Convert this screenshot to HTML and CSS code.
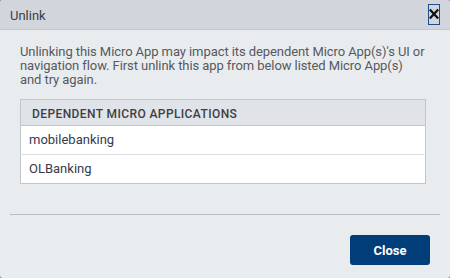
FILE: index.html
```html
<!DOCTYPE html>
<html lang="en">
<head>
  <meta charset="UTF-8">
  <title>Unlink</title>
  <link rel="stylesheet" href="styles.css">
</head>
<body>
  <div class="dialog">
    <div class="dialog-header">
      <span class="dialog-title">Unlink</span>
      <button class="close-x" aria-label="Close">
        <svg width="10" height="12" viewBox="0 0 10 12"><path d="M0.8 1.5 L9.2 10.5 M9.2 1.5 L0.8 10.5" stroke="#111" stroke-width="2.3"/></svg>
      </button>
    </div>
    <div class="dialog-body">
      <p class="message">Unlinking this Micro App may impact its dependent Micro App(s)'s UI or navigation flow. First unlink this app from below listed Micro App(s)<br>and try again.</p>
      <table class="dep-table">
        <thead>
          <tr><th>Dependent Micro Applications</th></tr>
        </thead>
        <tbody>
          <tr><td>mobilebanking</td></tr>
          <tr><td>OLBanking</td></tr>
        </tbody>
      </table>
    </div>
    <div class="dialog-footer">
      <button class="btn-close">Close</button>
    </div>
  </div>
</body>
</html>
```

FILE: styles.css
```css
html {
  background: #8a8f96;
}

body {
  margin: 0;
  font-family: Roboto, "Liberation Sans", sans-serif;
  font-size: 13px;
  color: #555;
}

.dialog {
  width: 450px;
  height: 278px;
  background: #e9ecef;
  border-radius: 3px;
  overflow: hidden;
  display: flex;
  flex-direction: column;
}

.dialog-header {
  height: 30px;
  box-sizing: border-box;
  background: #d2d6dc;
  border-bottom: 1px solid #c3c8ce;
  display: flex;
  align-items: center;
  justify-content: space-between;
  padding: 0 10px;
}

.dialog-title {
  font-size: 13px;
  color: #3a3d42;
  padding-top: 1px;
}

.close-x {
  width: 10px;
  height: 19px;
  padding: 0;
  margin-top: -1px;
  border: 1px solid #1d4f8c;
  background: transparent;
  display: flex;
  align-items: center;
  justify-content: center;
  box-sizing: content-box;
}

.dialog-body {
  padding: 15px 20px 0 20px;
}

.message {
  margin: 0;
  line-height: 14px;
  letter-spacing: -0.08px;
  color: #56595e;
}

.dep-table {
  margin-top: 12px;
  width: 406px;
  border-collapse: collapse;
  border: 1px solid #c1c6cb;
  background: #fff;
}

.dep-table th {
  height: 26px;
  padding: 2px 0 0 11px;
  box-sizing: border-box;
  text-align: left;
  background: #e0e3e7;
  border-bottom: 1px solid #c1c6cb;
  font-size: 12px;
  font-weight: 500;
  letter-spacing: 0.4px;
  text-transform: uppercase;
  color: #3c3f44;
}

.dep-table td {
  height: 27px;
  padding: 1px 0 0 8px;
  border-bottom: 1px solid #dcdfe2;
  color: #363a4a;
  vertical-align: top;
  line-height: 25px;
}

.dep-table tr:last-child td {
  border-bottom: none;
}

.dialog-footer {
  margin: auto 10px 0 10px;
  padding: 20px 10px 13px 0;
  border-top: 1px solid #b9bec3;
  display: flex;
  justify-content: flex-end;
}

.btn-close {
  width: 80px;
  height: 30px;
  background: #003d79;
  color: #fff;
  border: none;
  border-radius: 3px;
  font-family: Roboto, "Liberation Sans", sans-serif;
  font-size: 13px;
  font-weight: bold;
}
```
